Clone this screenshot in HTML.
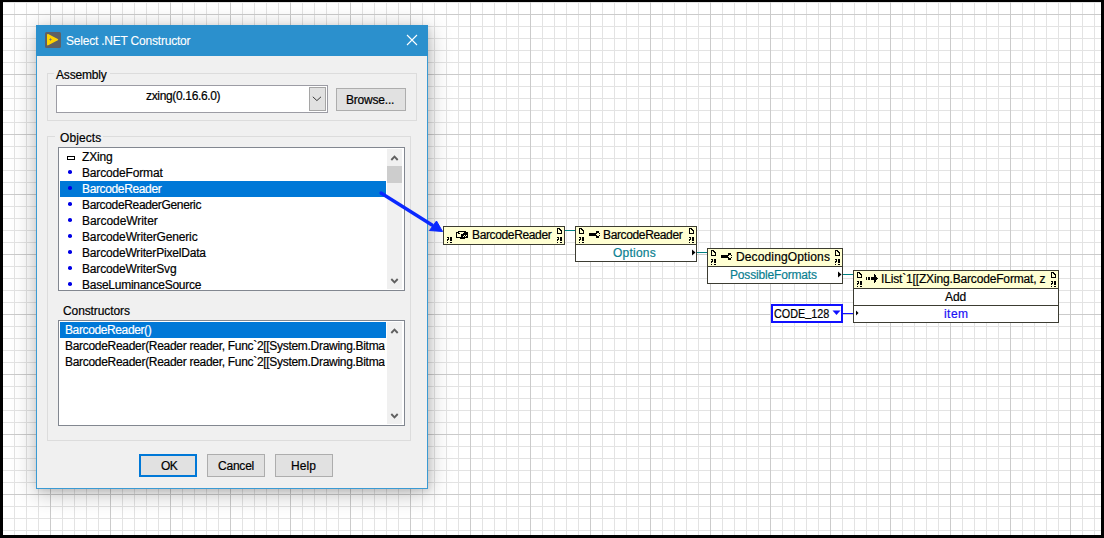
<!DOCTYPE html>
<html><head><meta charset="utf-8">
<style>
html,body{margin:0;padding:0;}
body{width:1104px;height:538px;overflow:hidden;position:relative;background:#000;font-family:"Liberation Sans",sans-serif;}
#cv{position:absolute;left:3px;top:2px;width:1098px;height:533px;background-color:#fff;
background-image:
linear-gradient(to right,#cbcbcb 1px,transparent 1px),
linear-gradient(to bottom,#cbcbcb 1px,transparent 1px),
linear-gradient(to right,#e3e3e3 1px,transparent 1px),
linear-gradient(to bottom,#e3e3e3 1px,transparent 1px);
background-size:60px 100%,100% 60px,12px 100%,100% 12px;
background-position:47px 0,0 12px,11px 0,0 12px;}
.a{position:absolute;box-sizing:border-box;}
.t{position:absolute;font-size:12px;line-height:14px;white-space:nowrap;color:#000;-webkit-text-stroke:0.2px currentColor;}
#dlg{position:absolute;left:36px;top:25px;width:392px;height:464px;box-sizing:border-box;border:1px solid #3a9ad3;background:#f0f0f0;
box-shadow:0 4px 22px rgba(0,0,0,0.28),2px 2px 6px rgba(0,0,0,0.1);}
#tb{position:absolute;left:36px;top:25px;width:392px;height:31px;background:#2b90cd;}
.grp{position:absolute;box-sizing:border-box;border:1px solid #dcdcdc;}
.lblbg{position:absolute;background:#f0f0f0;height:6px;}
.box{position:absolute;box-sizing:border-box;background:#fff;border:1px solid #828790;}
.btn{position:absolute;box-sizing:border-box;background:#e1e1e1;border:1px solid #adadad;}
.sel{position:absolute;background:#0078d7;}
.sb{position:absolute;background:#f0f0f0;}
.node{position:absolute;box-sizing:border-box;background:#ffffd2;border:1px solid #3c3c32;}
.row{position:absolute;box-sizing:border-box;background:#fff;border:1px solid #3c3c32;}
.wire{position:absolute;height:1px;background:#008080;}
.dot{position:absolute;width:3.6px;height:3.6px;background:#0000e6;border-radius:50%;}
</style></head>
<body>
<div id="cv"></div>
<div id="dlg"></div><div id="tb"></div>
<svg class="a" style="left:45px;top:32px" width="16" height="16" viewBox="0 0 16 16">
 <rect x="0" y="0" width="16" height="16" rx="1.5" fill="#5f6064"/>
 <path d="M2.8 2.7 L12.4 7.6 L2.8 12.6 Z" fill="#ffd400" stroke="#ffd400" stroke-width="1.6" stroke-linejoin="round"/>
 <path d="M5.5 5.8 L6 7 L7.2 7.5 L6 8 L5.5 9.2 L5 8 L3.8 7.5 L5 7 Z" fill="#6a6e80"/>
</svg>
<div class="t" style="left:66px;top:34px;color:#fff;letter-spacing:-0.21px;-webkit-text-stroke:0.1px #fff;">Select .NET Constructor</div>
<svg class="a" style="left:406px;top:34px" width="12" height="12" viewBox="0 0 12 12">
 <path d="M1 1 L11 11 M11 1 L1 11" stroke="#fff" stroke-width="1.1"/></svg>
<div class="grp" style="left:47px;top:73px;width:370px;height:48px;"></div>
<div class="lblbg" style="left:54px;top:70px;width:56px;"></div>
<div class="t" style="left:56px;top:68px;color:#000;letter-spacing:-0.17px;">Assembly</div>
<div class="box" style="left:56px;top:85px;width:272px;height:28px;border-color:#9c9ca4;"></div>
<div class="a" style="left:309px;top:87px;width:17px;height:24px;background:#e1e1e1;border:1px solid #a5a5a5;"></div>
<svg class="a" style="left:309px;top:87px" width="17" height="24" viewBox="0 0 17 24">
 <path d="M3.8 9.8 L7.9 13.6 L12 9.8" stroke="#3a3a3a" stroke-width="1" fill="none"/></svg>
<div class="t" style="left:146px;top:89px;color:#000;letter-spacing:-0.34px;">zxing(0.16.6.0)</div>
<div class="btn" style="left:336px;top:88px;width:70px;height:23px;"></div>
<div class="t" style="left:346px;top:93px;color:#000;letter-spacing:-0.21px;">Browse...</div>
<div class="grp" style="left:47px;top:136px;width:364px;height:305px;"></div>
<div class="lblbg" style="left:55px;top:133px;width:48px;"></div>
<div class="t" style="left:60px;top:131px;color:#000;letter-spacing:0.08px;">Objects</div>
<div class="box" style="left:58px;top:147px;width:347px;height:144px;"></div>
<div class="sel" style="left:60px;top:181px;width:326px;height:16px;"></div>
<div class="a" style="left:67px;top:156px;width:8px;height:4px;border:1px solid #000;"></div>
<div class="t" style="left:82px;top:150px;color:#000;letter-spacing:-0.17px;">ZXing</div>
<div class="dot" style="left:68.2px;top:170.2px;"></div>
<div class="t" style="left:82px;top:166px;color:#000;letter-spacing:-0.16px;">BarcodeFormat</div>
<div class="dot" style="left:68.2px;top:186.2px;"></div>
<div class="t" style="left:82px;top:182px;color:#fff;letter-spacing:-0.36px;">BarcodeReader</div>
<div class="dot" style="left:68.2px;top:202.2px;"></div>
<div class="t" style="left:82px;top:198px;color:#000;letter-spacing:-0.35px;">BarcodeReaderGeneric</div>
<div class="dot" style="left:68.2px;top:218.2px;"></div>
<div class="t" style="left:82px;top:214px;color:#000;letter-spacing:-0.06px;">BarcodeWriter</div>
<div class="dot" style="left:68.2px;top:234.2px;"></div>
<div class="t" style="left:82px;top:230px;color:#000;letter-spacing:-0.15px;">BarcodeWriterGeneric</div>
<div class="dot" style="left:68.2px;top:250.2px;"></div>
<div class="t" style="left:82px;top:246px;color:#000;letter-spacing:-0.18px;">BarcodeWriterPixelData</div>
<div class="dot" style="left:68.2px;top:266.2px;"></div>
<div class="t" style="left:82px;top:262px;color:#000;letter-spacing:-0.17px;">BarcodeWriterSvg</div>
<div class="dot" style="left:68.2px;top:282.2px;"></div>
<div class="a" style="left:59px;top:276px;width:327px;height:14px;overflow:hidden;"><div class="t" style="left:23px;top:2px;color:#000;letter-spacing:-0.26px;">BaseLuminanceSource</div></div>
<div class="sb" style="left:387px;top:149px;width:15px;height:140px;"></div>
<div class="a" style="left:387px;top:166px;width:15px;height:17px;background:#cdcdcd;"></div>
<svg class="a" style="left:387px;top:149px" width="16" height="140" viewBox="0 0 16 140">
 <path d="M4.3 11 L7.5 7.7 L10.7 11" stroke="#606060" stroke-width="1.9" fill="none"/>
 <path d="M4.3 130 L7.5 133.3 L10.7 130" stroke="#606060" stroke-width="1.9" fill="none"/></svg>
<div class="t" style="left:63px;top:304px;color:#000;letter-spacing:-0.1px;">Constructors</div>
<div class="box" style="left:58px;top:320px;width:347px;height:106px;"></div>
<div class="sel" style="left:60px;top:322px;width:326px;height:16px;"></div>
<div class="a" style="left:59px;top:321px;width:326px;height:100px;overflow:hidden;"><div class="t" style="left:6px;top:2px;color:#fff;letter-spacing:-0.38px;">BarcodeReader()</div><div class="t" style="left:6px;top:18px;color:#000;letter-spacing:-0.3px;">BarcodeReader(Reader reader, Func`2[[System.Drawing.Bitmap, System.Drawing]], Func`1)</div><div class="t" style="left:6px;top:34px;color:#000;letter-spacing:-0.3px;">BarcodeReader(Reader reader, Func`2[[System.Drawing.Bitmap, System.Drawing]], Func`1)</div></div>
<div class="sb" style="left:387px;top:322px;width:15px;height:102px;"></div>
<svg class="a" style="left:387px;top:322px" width="16" height="102" viewBox="0 0 16 102">
 <path d="M4.3 11 L7.5 7.7 L10.7 11" stroke="#606060" stroke-width="1.9" fill="none"/>
 <path d="M4.3 92 L7.5 95.3 L10.7 92" stroke="#606060" stroke-width="1.9" fill="none"/></svg>
<div class="btn" style="left:139px;top:454px;width:58px;height:23px;border:2px solid #0078d7;"></div>
<div class="t" style="left:161px;top:459px;color:#000;letter-spacing:-0.5px;">OK</div>
<div class="btn" style="left:207px;top:454px;width:58px;height:23px;"></div>
<div class="t" style="left:218px;top:459px;color:#000;letter-spacing:-0.22px;">Cancel</div>
<div class="btn" style="left:275px;top:454px;width:58px;height:23px;"></div>
<div class="t" style="left:291px;top:459px;color:#000;letter-spacing:0.1px;">Help</div>
<svg width="0" height="0" style="position:absolute"><defs><g id="doc"><path d="M0 0h3v1h-3zM0 1h1v1h-1zM2 1h2v1h-2zM0 2h1v1h-1zM3 2h2v1h-2zM0 3h1v1h-1zM4 3h1v1h-1zM0 4h1v1h-1zM4 4h1v1h-1zM0 5h5v1h-5z" fill="#000"/></g><g id="qe"><path d="M0 0h2v1h-2zM3 0h2v1h-2zM1 1h1v1h-1zM3 1h2v1h-2zM0 2h2v1h-2zM3 2h2v1h-2zM0 3h1v1h-1zM3 3h2v1h-2zM0 5h1v1h-1zM3 5h2v1h-2z" fill="#000"/></g><g id="prop"><path d="M7 0h3v1h-3zM7 1h3v1h-3zM0 2h8v1h-8zM10 2h1v1h-1zM0 3h7v1h-7zM0 4h8v1h-8zM10 4h1v1h-1zM7 5h3v1h-3zM7 6h3v1h-3z" fill="#000"/></g></defs></svg>
<div class="node" style="left:443px;top:226px;width:122px;height:19px;"></div>
<svg class="a" style="left:447px;top:237px" width="5" height="6" shape-rendering="crispEdges"><use href="#qe"/></svg>
<svg class="a" style="left:456px;top:231px" width="12" height="8" shape-rendering="crispEdges"><path d="M2 0h8v1h-8zM0 1h3v1h-3zM8 1h4v1h-4zM0 2h1v1h-1zM2 2h2v1h-2zM7 2h5v1h-5zM0 3h1v1h-1zM5 3h7v1h-7zM0 4h1v1h-1zM5 4h3v1h-3zM9 4h1v1h-1zM11 4h1v1h-1zM0 5h1v1h-1zM5 5h2v1h-2zM8 5h1v1h-1zM10 5h2v1h-2zM0 6h12v1h-12zM4 7h5v1h-5z" fill="#000"/></svg>
<div class="t" style="left:472px;top:228px;color:#000;letter-spacing:-0.36px;">BarcodeReader</div>
<svg class="a" style="left:557px;top:228px" width="5" height="6" shape-rendering="crispEdges"><use href="#doc"/></svg>
<svg class="a" style="left:557px;top:237px" width="5" height="6" shape-rendering="crispEdges"><use href="#qe"/></svg>
<div class="wire" style="left:565px;top:230px;width:10px;"></div>
<div class="node" style="left:575px;top:226px;width:122px;height:19px;"></div>
<div class="row" style="left:575px;top:244px;width:122px;height:18px;"></div>
<svg class="a" style="left:579px;top:228px" width="5" height="6" shape-rendering="crispEdges"><use href="#doc"/></svg>
<svg class="a" style="left:579px;top:237px" width="5" height="6" shape-rendering="crispEdges"><use href="#qe"/></svg>
<svg class="a" style="left:589px;top:231px" width="11" height="7" shape-rendering="crispEdges"><use href="#prop"/></svg>
<div class="t" style="left:603px;top:228px;color:#000;letter-spacing:-0.36px;">BarcodeReader</div>
<svg class="a" style="left:689px;top:228px" width="5" height="6" shape-rendering="crispEdges"><use href="#doc"/></svg>
<svg class="a" style="left:689px;top:237px" width="5" height="6" shape-rendering="crispEdges"><use href="#qe"/></svg>
<div class="t" style="left:613px;top:246px;color:#0a8090;letter-spacing:0.22px;">Options</div>
<svg class="a" style="left:691px;top:249px" width="5" height="7"><path d="M1 0.5 L4.5 3.5 L1 6.5 Z" fill="#000"/></svg>
<div class="wire" style="left:697px;top:252px;width:10px;"></div>
<div class="node" style="left:707px;top:248px;width:136px;height:19px;"></div>
<div class="row" style="left:707px;top:266px;width:136px;height:18px;"></div>
<svg class="a" style="left:711px;top:250px" width="5" height="6" shape-rendering="crispEdges"><use href="#doc"/></svg>
<svg class="a" style="left:711px;top:259px" width="5" height="6" shape-rendering="crispEdges"><use href="#qe"/></svg>
<svg class="a" style="left:721px;top:253px" width="11" height="7" shape-rendering="crispEdges"><use href="#prop"/></svg>
<div class="t" style="left:736px;top:250px;color:#000;letter-spacing:0.13px;">DecodingOptions</div>
<svg class="a" style="left:835px;top:250px" width="5" height="6" shape-rendering="crispEdges"><use href="#doc"/></svg>
<svg class="a" style="left:835px;top:259px" width="5" height="6" shape-rendering="crispEdges"><use href="#qe"/></svg>
<div class="t" style="left:730px;top:268px;color:#0a8090;letter-spacing:-0.17px;">PossibleFormats</div>
<svg class="a" style="left:837px;top:271px" width="5" height="7"><path d="M1 0.5 L4.5 3.5 L1 6.5 Z" fill="#000"/></svg>
<div class="wire" style="left:843px;top:274px;width:10px;"></div>
<div class="node" style="left:853px;top:270px;width:206px;height:19px;"></div>
<div class="row" style="left:853px;top:288px;width:206px;height:18px;"></div>
<div class="row" style="left:853px;top:305px;width:206px;height:18px;"></div>
<svg class="a" style="left:857px;top:272px" width="5" height="6" shape-rendering="crispEdges"><use href="#doc"/></svg>
<svg class="a" style="left:857px;top:281px" width="5" height="6" shape-rendering="crispEdges"><use href="#qe"/></svg>
<svg class="a" style="left:866px;top:274px" width="12" height="9" shape-rendering="crispEdges"><path d="M8 0h1v1h-1zM8 1h2v1h-2zM8 2h2v1h-2zM0 3h1v1h-1zM2 3h2v1h-2zM5 3h6v1h-6zM0 4h1v1h-1zM2 4h2v1h-2zM5 4h7v1h-7zM0 5h1v1h-1zM2 5h2v1h-2zM5 5h6v1h-6zM8 6h2v1h-2zM8 7h2v1h-2zM8 8h1v1h-1z" fill="#000"/></svg>
<div class="t" style="left:881px;top:272px;color:#000;letter-spacing:-0.16px;">IList`1[[ZXing.BarcodeFormat, z</div>
<svg class="a" style="left:1051px;top:272px" width="5" height="6" shape-rendering="crispEdges"><use href="#doc"/></svg>
<svg class="a" style="left:1051px;top:281px" width="5" height="6" shape-rendering="crispEdges"><use href="#qe"/></svg>
<div class="t" style="left:945px;top:290px;color:#000;letter-spacing:-0.1px;">Add</div>
<div class="t" style="left:944px;top:307px;color:#1a10f5;letter-spacing:0.45px;">item</div>
<svg class="a" style="left:855px;top:310px" width="5" height="7"><path d="M1 0.5 L3.5 3 L1 5.5 Z" fill="#000"/></svg>
<div class="a" style="left:771px;top:304px;width:72px;height:19px;background:#fff;border:2px solid #1010ff;"></div>
<div class="t" style="left:774px;top:307px;color:#000;letter-spacing:0px;transform:scaleX(0.9);transform-origin:0 0;">CODE<span style="position:relative;top:-2px">_</span>128</div>
<svg class="a" style="left:832px;top:310px" width="9" height="6"><path d="M0.5 0.5 H8.5 L4.5 5 Z" fill="#1010ff"/></svg>
<div class="wire" style="left:843px;top:313px;width:10px;background:#1010ff;"></div>
<svg class="a" style="left:370px;top:180px" width="80" height="60" viewBox="370 180 80 60">
 <path d="M381 193 L432 225" stroke="#0a28ff" stroke-width="3.3" stroke-linecap="round"/>
 <path d="M442.5 231.5 L429.5 230.5 L436.5 221 Z" fill="#0a28ff" stroke="#0a28ff" stroke-width="1" stroke-linejoin="round"/></svg>
</body></html>
